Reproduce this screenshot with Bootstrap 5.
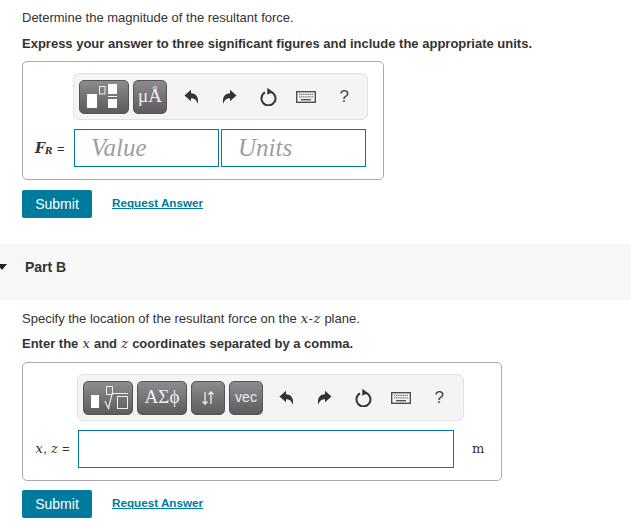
<!DOCTYPE html>
<html lang="en">
<head>
    <meta charset="UTF-8">
    <meta name="viewport" content="width=device-width, initial-scale=1.0">
    <title>Part B</title>
    <link href="https://cdn.jsdelivr.net/npm/bootstrap@5.3.0/dist/css/bootstrap.min.css" rel="stylesheet">
    <style>
        body { font-family: "Liberation Sans", Arial, sans-serif; font-size: 13px; color: #333; overflow: hidden; }
        .part-pad { padding-left: 22px; }
        .q-line { margin: 0; line-height: 16px; height: 16px; }
        .q-bold { font-weight: 700; }
        .mth { font-family: "DejaVu Serif", serif; font-style: italic; font-size: 13px; font-weight: 400; padding: 0 .5px; }
        .answer-box { border: 1px solid #aaa; border-radius: 5px; background: #fff; height: 119px; padding: 11px 0 0; }
        .box-a { width: 362px; }
        .box-b { width: 480px; }
        .tool-row { height: 47px; margin-bottom: 9px; }
        .tool-a { margin-left: 50px; width: 295px; }
        .tool-b { margin-left: 54px; width: 387px; }
        .toolbar { background: #f4f4f4; border: 1px solid #e2e2e2; border-radius: 6px; padding: 5px; height: 47px; }
        .tool-btn { height: 34px; border: 1px solid #555; border-radius: 5px; background: linear-gradient(#8d8b8f, #5c5b5d); color: #fff; flex: none; }
        .w-50px { width: 50px; } .w-34px { width: 34px; }
        .tool-gap { gap: 4px; }
        .sym-serif { font-family: "Liberation Serif", serif; font-size: 19px; color: #eee; }
        .sym-sans { font-size: 14px; color: #eee; }
        .tool-ic { width: 38.25px; flex: none; color: #333; }
        .tool-ic svg { display: block; }
        .help-q { font-size: 17px; color: #444; }
        .icons-a { margin-left: 1px; }
        .icons-b { margin-left: 0; }
        .input-row { height: 38px; }
        .lbl-a { width: 51px; }
        .lbl-b { width: 55px; }
        .lbl-txt { font-size: 13px; padding-left: 12px; white-space: nowrap; }
        .lbl-f { font-family: "DejaVu Serif", serif; font-style: italic; font-weight: 700; font-size: 14px; margin-right: 1px; }
        .lbl-f sub { font-size: 9px; bottom: -.15em; }
        .fake-inp { border: 1px solid #007b9e; height: 38px; background: #fff; font-family: "Liberation Serif", serif; font-style: italic; font-size: 25px; color: #9a9fa6; line-height: 36px; flex: none; }
        .inp-val { width: 145px; padding-left: 16px; margin-right: 2px; }
        .inp-unit { width: 145px; padding-left: 16px; }
        .inp-wide { width: 376px; }
        .unit-m { font-family: "DejaVu Serif", serif; font-size: 13px; margin-left: 18px; }
        .btn-go { background: #007b9e; color: #fff; border: 0; border-radius: 2px; width: 70px; height: 28px; padding: 0; font-size: 14px; }
        .btn-go:hover { background: #007b9e; color: #fff; }
        .req-link { color: #007b9e; font-size: 11.7px; font-weight: 700; margin-left: 20px; margin-top: -2px; }
        .part-band { background: #f7f7f7; height: 56px; margin-top: 26px; margin-bottom: 11px; padding-left: 25px; }
        .part-ttl { font-size: 14px; font-weight: 700; line-height: 16px; padding-top: 15px; color: #333; }
        .caret-tri { left: -3px; top: 20px; width: 0; height: 0; border-left: 5px solid transparent; border-right: 5px solid transparent; border-top: 6px solid #222; }
        .top-a { padding-top: 10px; }
        .gap-q { margin-bottom: 10px; }
        .gap-box { margin-bottom: 10px; }
        .gap-box-b { margin-bottom: 9px; }
        .q2 { margin-bottom: 9px; }
        .q3 { margin-bottom: 10px; }
        .q3a { margin-bottom: 9px; }
    </style>
</head>
<body class="bg-white">
    <svg width="0" height="0" class="d-block">
        <defs>
            <path id="i-undo" d="M.5 6.5 7 .8v3.4c4.8 0 8.3 4 6.6 10.6C12.7 11 10.5 9.3 7 9.3v3z"/>
            <g id="i-reload" fill="none">
                <path d="M6 5.3A7 7 0 1 0 11.5 4.7" stroke="#333" stroke-width="2"/>
                <path d="M8.3 .8 13.8 5 8.3 7.8z" fill="#333"/>
            </g>
            <g id="i-keys">
                <rect x=".7" y=".7" width="18.6" height="10.6" fill="#f4f4f4" stroke="#444" stroke-width="1.3"/>
                <path d="M3 3.3h14M3 5.8h14" stroke="#777" stroke-width="1.2" stroke-dasharray="1.4 .7"/>
                <path d="M5 8.7h10" stroke="#555" stroke-width="1.4"/>
            </g>
        </defs>
    </svg>

    <div class="part-pad top-a">
        <p class="q-line gap-q">Determine the magnitude of the resultant force.</p>
        <p class="q-line q-bold q3a">Express your answer to three significant figures and include the appropriate units.</p>
        <div class="answer-box box-a gap-box">
            <div class="tool-row tool-a toolbar d-flex align-items-center tool-gap">
                <div class="tool-btn w-50px">
                    <svg width="48" height="32" viewBox="0 0 48 32">
                        <rect x="7" y="13" width="10" height="14" fill="#fff"/>
                        <rect x="19.5" y="5.5" width="5.5" height="7.5" fill="none" stroke="#eee"/>
                        <rect x="28" y="3" width="9" height="10" fill="#fff"/>
                        <rect x="28" y="15" width="9" height="1" fill="#fff"/>
                        <rect x="28" y="18" width="9" height="9" fill="#fff"/>
                    </svg>
                </div>
                <div class="tool-btn w-34px d-flex align-items-center justify-content-center sym-serif">μÅ</div>
                <div class="d-flex align-items-center icons-a">
                    <div class="tool-ic d-flex justify-content-center"><svg width="15" height="15" viewBox="0 0 15 15" fill="#333"><use href="#i-undo"/></svg></div>
                    <div class="tool-ic d-flex justify-content-center"><svg width="15" height="15" viewBox="0 0 15 15" fill="#333"><use href="#i-undo" transform="matrix(-1 0 0 1 15 0)"/></svg></div>
                    <div class="tool-ic d-flex justify-content-center"><svg width="18" height="19" viewBox="0 0 18 19"><use href="#i-reload"/></svg></div>
                    <div class="tool-ic d-flex justify-content-center"><svg width="20" height="12" viewBox="0 0 20 12"><use href="#i-keys"/></svg></div>
                    <div class="tool-ic d-flex justify-content-center help-q">?</div>
                </div>
            </div>
            <div class="input-row d-flex align-items-center">
                <div class="lbl-a lbl-txt"><span class="lbl-f">F<sub>R</sub></span> =</div>
                <div class="fake-inp inp-val">Value</div>
                <div class="fake-inp inp-unit">Units</div>
            </div>
        </div>
        <div class="d-flex align-items-center">
            <button class="btn btn-go">Submit</button>
            <a href="#" class="req-link">Request Answer</a>
        </div>
    </div>

    <div class="part-band position-relative">
        <span class="caret-tri position-absolute"></span>
        <div class="part-ttl">Part B</div>
    </div>

    <div class="part-pad">
        <p class="q-line q2">Specify the location of the resultant force on the <span class="mth">x</span>-<span class="mth">z</span> plane.</p>
        <p class="q-line q-bold q3">Enter the <span class="mth">x</span> and <span class="mth">z</span> coordinates separated by a comma.</p>
        <div class="answer-box box-b gap-box-b">
            <div class="tool-row tool-b toolbar d-flex align-items-center tool-gap">
                <div class="tool-btn w-50px">
                    <svg width="48" height="32" viewBox="0 0 48 32">
                        <rect x="7" y="13" width="8" height="13" fill="#fff"/>
                        <rect x="22.5" y="4.5" width="6" height="8" fill="none" stroke="#eee"/>
                        <path d="M21 19 24.5 26.5 28 11.5H44" fill="none" stroke="#eee" stroke-width="1.2"/>
                        <rect x="33.5" y="14.5" width="10" height="12" fill="none" stroke="#eee"/>
                    </svg>
                </div>
                <div class="tool-btn w-50px d-flex align-items-center justify-content-center sym-serif">ΑΣϕ</div>
                <div class="tool-btn w-34px d-flex align-items-center justify-content-center">
                    <svg width="16" height="16" viewBox="0 0 16 16" fill="none" stroke="#eee" stroke-width="1.3"><path d="M5 2V14M2.5 11.5 5 14 7.5 11.5M11 14V2M8.5 4.5 11 2 13.5 4.5"/></svg>
                </div>
                <div class="tool-btn w-34px d-flex align-items-center justify-content-center sym-sans">vec</div>
                <div class="d-flex align-items-center icons-b">
                    <div class="tool-ic d-flex justify-content-center"><svg width="15" height="15" viewBox="0 0 15 15" fill="#333"><use href="#i-undo"/></svg></div>
                    <div class="tool-ic d-flex justify-content-center"><svg width="15" height="15" viewBox="0 0 15 15" fill="#333"><use href="#i-undo" transform="matrix(-1 0 0 1 15 0)"/></svg></div>
                    <div class="tool-ic d-flex justify-content-center"><svg width="18" height="19" viewBox="0 0 18 19"><use href="#i-reload"/></svg></div>
                    <div class="tool-ic d-flex justify-content-center"><svg width="20" height="12" viewBox="0 0 20 12"><use href="#i-keys"/></svg></div>
                    <div class="tool-ic d-flex justify-content-center help-q">?</div>
                </div>
            </div>
            <div class="input-row d-flex align-items-center">
                <div class="lbl-b lbl-txt"><span class="mth">x</span>, <span class="mth">z</span> =</div>
                <div class="fake-inp inp-wide"></div>
                <div class="unit-m">m</div>
            </div>
        </div>
        <div class="d-flex align-items-center">
            <button class="btn btn-go">Submit</button>
            <a href="#" class="req-link">Request Answer</a>
        </div>
    </div>
</body>
</html>
